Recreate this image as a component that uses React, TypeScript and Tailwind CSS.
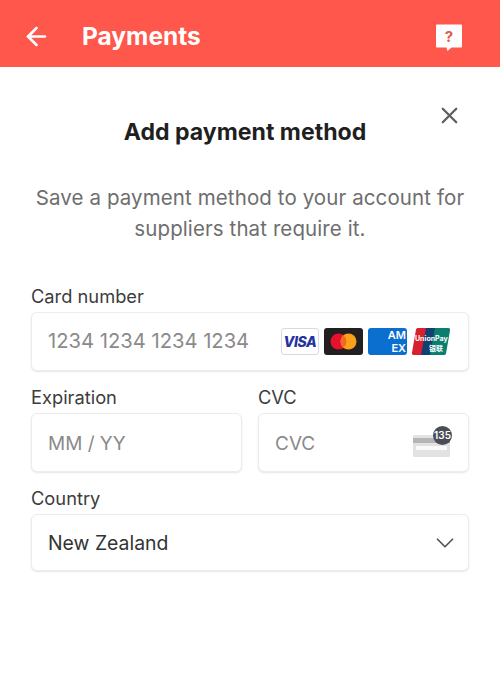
import { ArrowLeft, ChevronDown, X } from "lucide-react";

const fieldBox =
  "h-[59px] bg-white rounded-md border border-[#ececec] shadow-[0_1px_2px_rgba(0,0,0,0.1)] flex items-center pl-4 pr-[18px]";

const HelpIcon = () => (
  <svg width="28" height="28" viewBox="0 0 28 28">
    <path d="M2 1.5h24a1 1 0 0 1 1 1v21a1 1 0 0 1-1 1h-9.5l-4 3.5-1-3.5H2a1 1 0 0 1-1-1v-21a1 1 0 0 1 1-1z" fill="#fff" />
    <text x="14" y="18.5" textAnchor="middle" fontSize="15" fontWeight="700" fill="#e4574e" fontFamily="Inter, sans-serif">?</text>
  </svg>
);

const Visa = () => (
  <div className="w-[38px] h-[27px] rounded-[3px] bg-white border border-[#d9d9e6] flex items-center justify-center text-[#24339b] text-[14px] font-extrabold italic tracking-tight">
    VISA
  </div>
);

const Mastercard = () => (
  <div className="w-[39px] h-[27px] rounded-[3px] bg-[#231f20] flex items-center justify-center">
    <svg width="27" height="17" viewBox="0 0 27 17">
      <circle cx="8.5" cy="8.5" r="8" fill="#e8112d" />
      <circle cx="18.5" cy="8.5" r="8" fill="#f9a11b" />
      <path d="M13.5 2.3a8 8 0 0 1 0 12.4a8 8 0 0 1 0-12.4z" fill="#f26a21" />
    </svg>
  </div>
);

const Amex = () => (
  <div className="w-[39px] h-[27px] rounded-[3px] bg-[#0b6fd0] flex flex-col items-end justify-center pr-[1px] text-white text-[11px] leading-[13px] font-semibold">
    <span>AM</span>
    <span>EX</span>
  </div>
);

const UnionPay = () => (
  <svg width="38" height="27" viewBox="0 0 38 27">
    <path d="M6 0h10l-5 27H2a2 2 0 0 1-2-2.4L4 1.6A2 2 0 0 1 6 0z" fill="#d8202f" />
    <path d="M14 0h11l-5 27H9z" fill="#12406f" />
    <path d="M23 0h13a2 2 0 0 1 2 2.4l-4 23A2 2 0 0 1 32 27H18z" fill="#0b7f6f" />
    <text x="3" y="13" fontSize="7" fontWeight="700" fill="#fff" fontFamily="Inter, sans-serif">UnionPay</text>
    <text x="17" y="23" fontSize="7" fontWeight="700" fill="#fff" fontFamily="'Noto Sans CJK SC', sans-serif">银联</text>
  </svg>
);

const CvcIcon = () => (
  <div className="relative w-[37px] h-[28px]">
    <svg width="37" height="22" viewBox="0 0 37 22" className="absolute left-0 bottom-0">
      <rect width="37" height="22" rx="1.5" fill="#e2e2e2" />
      <rect y="3" width="37" height="5" fill="#b5b5b5" />
      <rect x="3" y="11" width="31" height="4" fill="#fafafa" />
    </svg>
    <div className="absolute -right-[2px] top-[-3px] w-[19px] h-[19px] rounded-full bg-[#4a4d55] text-white text-[10px] font-semibold flex items-center justify-center">
      135
    </div>
  </div>
);

export default function App() {
  return (
    <div className="w-[500px] h-[686px] bg-white font-['Inter',sans-serif]">
      <header className="h-[67px] bg-[#ff574b] flex items-center pt-[6px] pl-[22px] pr-[37px] text-white">
        <ArrowLeft size={29} strokeWidth={2.2} />
        <h1 className="ml-[31px] text-[24.5px] font-bold">Payments</h1>
        <div className="ml-auto">
          <HelpIcon />
        </div>
      </header>

      <main className="relative px-[31px]">
        <button className="absolute right-[37px] top-[35px] text-[#5f5f5f]">
          <X size={27} strokeWidth={2} />
        </button>

        <h2 className="pt-[49px] pr-[10px] text-center text-[23.1px] leading-[32px] font-bold text-[#1f1f1f]">
          Add payment method
        </h2>
        <p className="mt-[34px] text-center text-[20.5px] leading-[31px] text-[#6e6e6e] tracking-[0.1px]">
          Save a payment method to your account for
          <br />
          suppliers that require it.
        </p>

        <label className="block mt-[39px] text-[18.3px] leading-[26px] text-[#3c3c3c]">Card number</label>
        <div className={`${fieldBox} mt-[3px]`}>
          <span className="text-[20.2px] text-[#8a8a8a]">1234 1234 1234 1234</span>
          <div className="ml-auto flex gap-[5px]">
            <Visa />
            <Mastercard />
            <Amex />
            <UnionPay />
          </div>
        </div>

        <div className="grid grid-cols-2 gap-4 mt-[13px]">
          <div>
            <label className="block text-[18.3px] leading-[26px] text-[#3c3c3c]">Expiration</label>
            <div className={`${fieldBox} mt-[3px]`}>
              <span className="text-[19px] text-[#8a8a8a] mt-[3px]">MM / YY</span>
            </div>
          </div>
          <div>
            <label className="block text-[18.3px] leading-[26px] text-[#3c3c3c]">CVC</label>
            <div className={`${fieldBox} mt-[3px]`}>
              <span className="text-[19px] text-[#8a8a8a] mt-[3px]">CVC</span>
              <div className="ml-auto">
                <CvcIcon />
              </div>
            </div>
          </div>
        </div>

        <label className="block mt-[13px] text-[18.3px] leading-[26px] text-[#3c3c3c]">Country</label>
        <div className={`${fieldBox} mt-[3px] !h-[57px]`}>
          <span className="text-[19.4px] text-[#333] mt-[2px]">New Zealand</span>
          <ChevronDown size={30} strokeWidth={1.4} className="ml-auto text-[#555] -mr-[10px]" />
        </div>
      </main>
    </div>
  );
}
